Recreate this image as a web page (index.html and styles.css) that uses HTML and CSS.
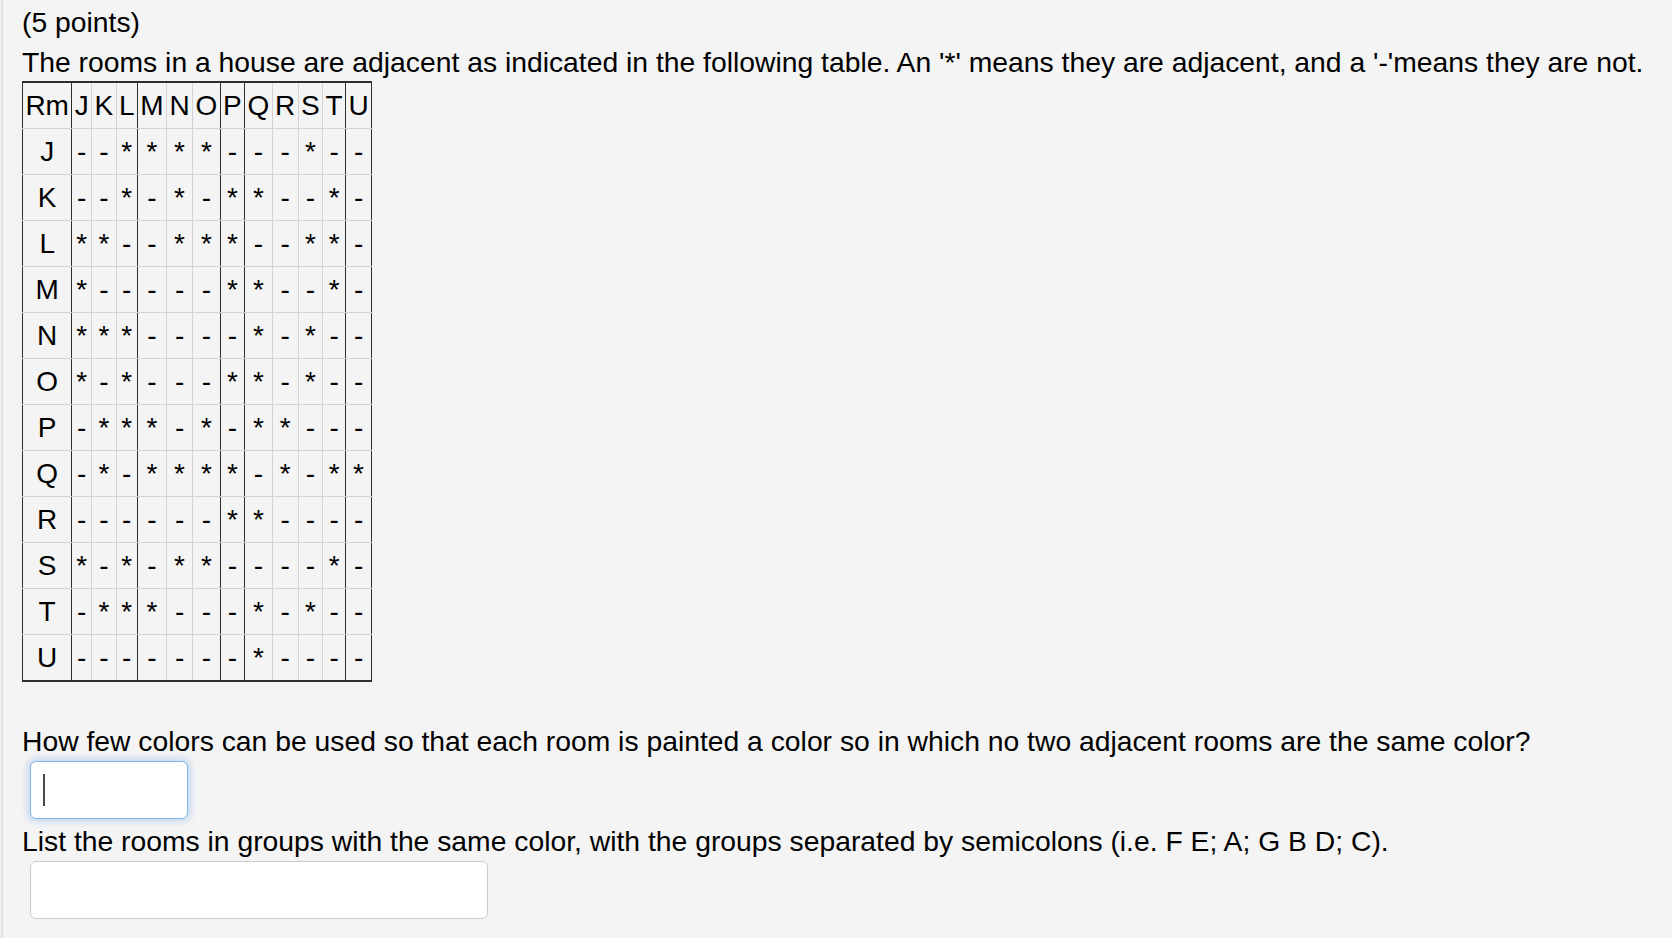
FILE: index.html
```html
<!DOCTYPE html>
<html lang="en">
<head>
<meta charset="utf-8">
<title>Room adjacency question</title>
<link rel="stylesheet" href="styles.css">
</head>
<body>
<div class="question">
  <p class="points">(5 points)</p>
  <p class="prompt">The rooms in a house are adjacent as indicated in the following table. An '*' means they are adjacent, and a '-'means they are not.</p>
  <table class="adj">
    <tr class="head"><th>Rm</th><th>J</th><th>K</th><th>L</th><th>M</th><th>N</th><th>O</th><th>P</th><th>Q</th><th>R</th><th>S</th><th>T</th><th>U</th></tr>
    <tr><th>J</th><td>-</td><td>-</td><td>*</td><td>*</td><td>*</td><td>*</td><td>-</td><td>-</td><td>-</td><td>*</td><td>-</td><td>-</td></tr>
    <tr><th>K</th><td>-</td><td>-</td><td>*</td><td>-</td><td>*</td><td>-</td><td>*</td><td>*</td><td>-</td><td>-</td><td>*</td><td>-</td></tr>
    <tr><th>L</th><td>*</td><td>*</td><td>-</td><td>-</td><td>*</td><td>*</td><td>*</td><td>-</td><td>-</td><td>*</td><td>*</td><td>-</td></tr>
    <tr><th>M</th><td>*</td><td>-</td><td>-</td><td>-</td><td>-</td><td>-</td><td>*</td><td>*</td><td>-</td><td>-</td><td>*</td><td>-</td></tr>
    <tr><th>N</th><td>*</td><td>*</td><td>*</td><td>-</td><td>-</td><td>-</td><td>-</td><td>*</td><td>-</td><td>*</td><td>-</td><td>-</td></tr>
    <tr><th>O</th><td>*</td><td>-</td><td>*</td><td>-</td><td>-</td><td>-</td><td>*</td><td>*</td><td>-</td><td>*</td><td>-</td><td>-</td></tr>
    <tr><th>P</th><td>-</td><td>*</td><td>*</td><td>*</td><td>-</td><td>*</td><td>-</td><td>*</td><td>*</td><td>-</td><td>-</td><td>-</td></tr>
    <tr><th>Q</th><td>-</td><td>*</td><td>-</td><td>*</td><td>*</td><td>*</td><td>*</td><td>-</td><td>*</td><td>-</td><td>*</td><td>*</td></tr>
    <tr><th>R</th><td>-</td><td>-</td><td>-</td><td>-</td><td>-</td><td>-</td><td>*</td><td>*</td><td>-</td><td>-</td><td>-</td><td>-</td></tr>
    <tr><th>S</th><td>*</td><td>-</td><td>*</td><td>-</td><td>*</td><td>*</td><td>-</td><td>-</td><td>-</td><td>-</td><td>*</td><td>-</td></tr>
    <tr><th>T</th><td>-</td><td>*</td><td>*</td><td>*</td><td>-</td><td>-</td><td>-</td><td>*</td><td>-</td><td>*</td><td>-</td><td>-</td></tr>
    <tr class="last"><th>U</th><td>-</td><td>-</td><td>-</td><td>-</td><td>-</td><td>-</td><td>-</td><td>*</td><td>-</td><td>-</td><td>-</td><td>-</td></tr>
  </table>
  <p class="ask">How few colors can be used so that each room is painted a color so in which no two adjacent rooms are the same color?</p>
  <div class="field short focused"><span class="caret"></span></div>
  <p class="ask">List the rooms in groups with the same color, with the groups separated by semicolons (i.e. F E; A; G B D; C).</p>
  <div class="field long"></div>
</div>
</body>
</html>
```

FILE: styles.css
```css
html, body {
  margin: 0;
  padding: 0;
  background: #f4f4f4;
}

body {
  font-family: "Liberation Sans", Arial, Helvetica, sans-serif;
  font-size: 28.3px;
  color: #000;
}

.question {
  min-height: 938px;
  box-sizing: border-box;
  margin-left: 1px;
  border-left: 2px solid #e1e1e1;
  padding: 4px 0 0 19px;
}

.points,
.prompt {
  margin: 0;
  line-height: 36px;
}

.prompt {
  margin-top: 4px;
}

.adj {
  border-collapse: collapse;
  margin-top: 1px;
  font-size: 28px;
}

.adj th,
.adj td {
  border: 1px solid #d3d3d3;
  padding: 0 2.4px;
  height: 45px;
  text-align: center;
  vertical-align: middle;
  font-weight: normal;
  line-height: 30px;
}

.adj tr > :first-child {
  border-left: 1px solid #2e2e2e;
}

.adj tr > :nth-child(1),
.adj tr > :nth-child(4),
.adj tr > :nth-child(7),
.adj tr > :nth-child(8),
.adj tr > :nth-child(12),
.adj tr > :nth-child(13) {
  border-right: 1px solid #2e2e2e;
}

.adj .head > * {
  border-top: 2px solid #2e2e2e;
}

.adj .last > * {
  border-bottom: 2px solid #2e2e2e;
}

.ask {
  margin: 0;
  line-height: 32px;
}

.adj + .ask {
  margin-top: 43px;
}

.field {
  box-sizing: border-box;
  height: 58px;
  margin: 4px 0 6px 8px;
  background: #fff;
  border: 1px solid #cbcbcb;
  border-radius: 6px;
  position: relative;
}

.field.short {
  width: 158px;
}

.field.long {
  width: 458px;
}

.field.focused {
  border: 1.5px solid #80b4ec;
  box-shadow: 0 0 6px 3px rgba(120, 170, 230, 0.35);
}

.caret {
  position: absolute;
  left: 12px;
  top: 12px;
  width: 2px;
  height: 32px;
  background: #4a4a4a;
}
```
